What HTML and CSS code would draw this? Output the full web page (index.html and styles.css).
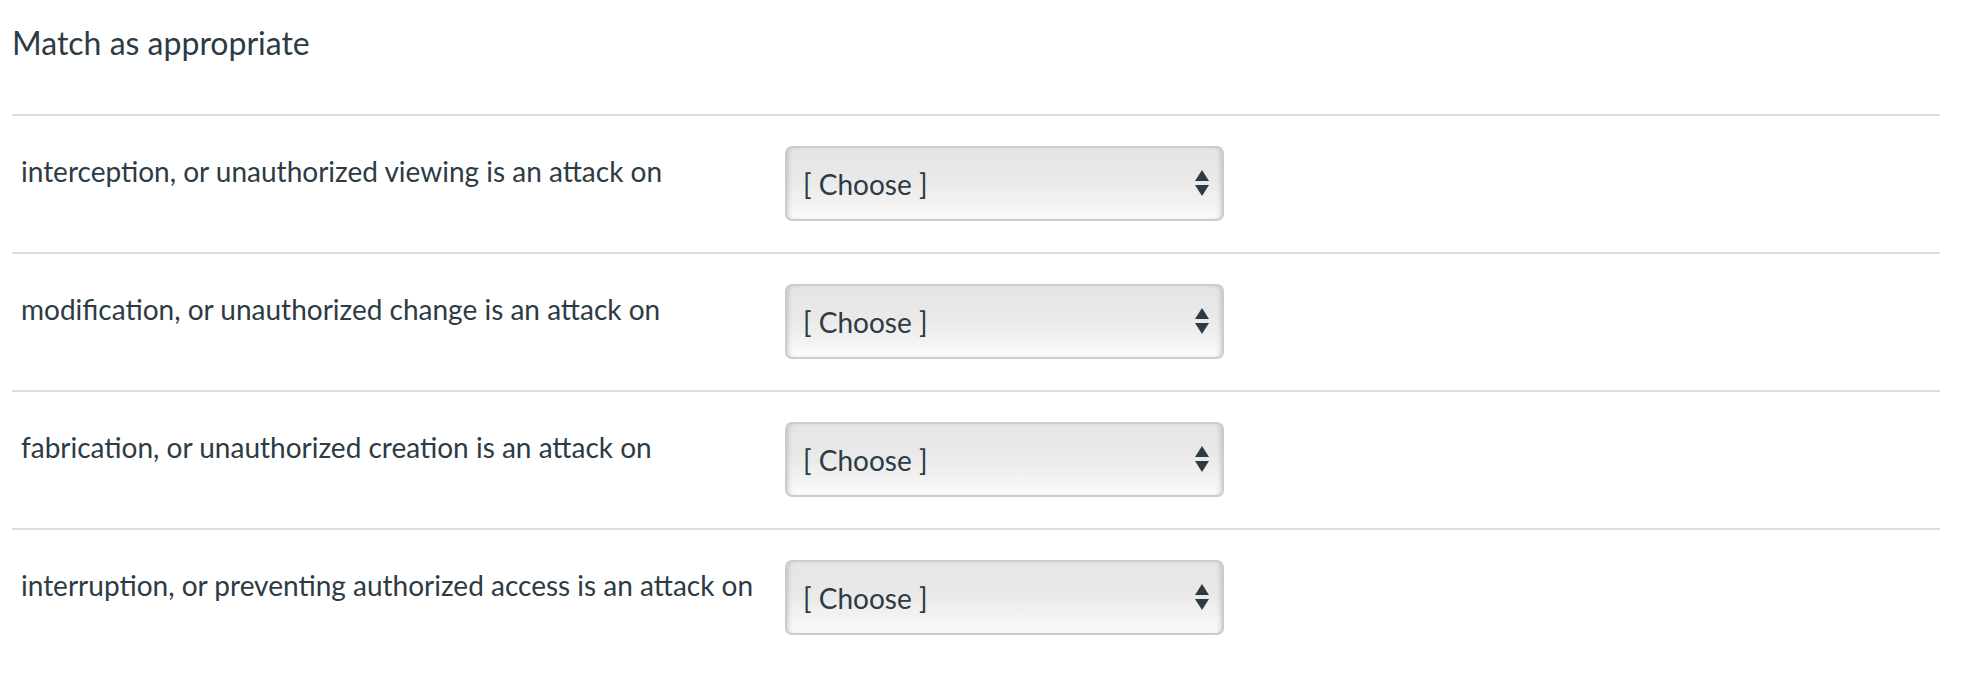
FILE: index.html
```html
<!DOCTYPE html>
<html lang="en">
<head>
<meta charset="utf-8">
<title>Match as appropriate</title>
<link rel="stylesheet" href="styles.css">
</head>
<body>
<div class="question">
  <h2 class="question-title">Match as appropriate</h2>
  <div class="answers">
    <div class="answer-row">
      <div class="answer-label">interception, or unauthorized viewing is an attack on</div>
      <div class="select-box">
        <span class="select-text">[ Choose ]</span>
        <svg class="select-arrows" width="14" height="27" viewBox="0 0 14 27"><polygon points="7,0 14,11 0,11"/><polygon points="0,15 14,15 7,26"/></svg>
      </div>
    </div>
    <div class="answer-row">
      <div class="answer-label">modification, or unauthorized change is an attack on</div>
      <div class="select-box">
        <span class="select-text">[ Choose ]</span>
        <svg class="select-arrows" width="14" height="27" viewBox="0 0 14 27"><polygon points="7,0 14,11 0,11"/><polygon points="0,15 14,15 7,26"/></svg>
      </div>
    </div>
    <div class="answer-row">
      <div class="answer-label">fabrication, or unauthorized creation is an attack on</div>
      <div class="select-box">
        <span class="select-text">[ Choose ]</span>
        <svg class="select-arrows" width="14" height="27" viewBox="0 0 14 27"><polygon points="7,0 14,11 0,11"/><polygon points="0,15 14,15 7,26"/></svg>
      </div>
    </div>
    <div class="answer-row">
      <div class="answer-label">interruption, or preventing authorized access is an attack on</div>
      <div class="select-box">
        <span class="select-text">[ Choose ]</span>
        <svg class="select-arrows" width="14" height="27" viewBox="0 0 14 27"><polygon points="7,0 14,11 0,11"/><polygon points="0,15 14,15 7,26"/></svg>
      </div>
    </div>
  </div>
</div>
</body>
</html>
```
FILE: styles.css
```css
html, body {
  margin: 0;
  padding: 0;
  background: #ffffff;
}

body {
  font-family: Lato, "Open Sans", "Liberation Sans", sans-serif;
  color: #2d3b45;
}

.question {
  width: 1928px;
  margin-left: 12px;
  padding-top: 24px;
}

.question-title {
  margin: 0 0 52px 0;
  font-size: 32px;
  line-height: 38px;
  font-weight: 400;
}

.answer-row {
  display: grid;
  grid-template-columns: 773px 439px;
  border-top: 2px solid #dddddd;
  padding: 30px 0 31px 0;
}

.answer-label {
  padding-left: 9px;
  padding-top: 5px;
  font-size: 28px;
  line-height: 40px;
}

.select-box {
  box-sizing: border-box;
  height: 75px;
  display: flex;
  align-items: center;
  justify-content: space-between;
  padding: 0 13px 0 16px;
  border: 2px solid #cccccc;
  border-radius: 7px;
  background: linear-gradient(to bottom, #e5e5e5 0%, #e9e9e9 45%, #f2f2f2 75%, #fbfbfb 100%);
  box-shadow: inset 4px 0 5px -3px rgba(0, 0, 0, 0.18), inset -4px 0 5px -3px rgba(0, 0, 0, 0.18);
}

.select-text {
  font-size: 28px;
  line-height: 34px;
  padding-top: 0;
}

.select-arrows {
  fill: #2d3b45;
  display: block;
}
```
